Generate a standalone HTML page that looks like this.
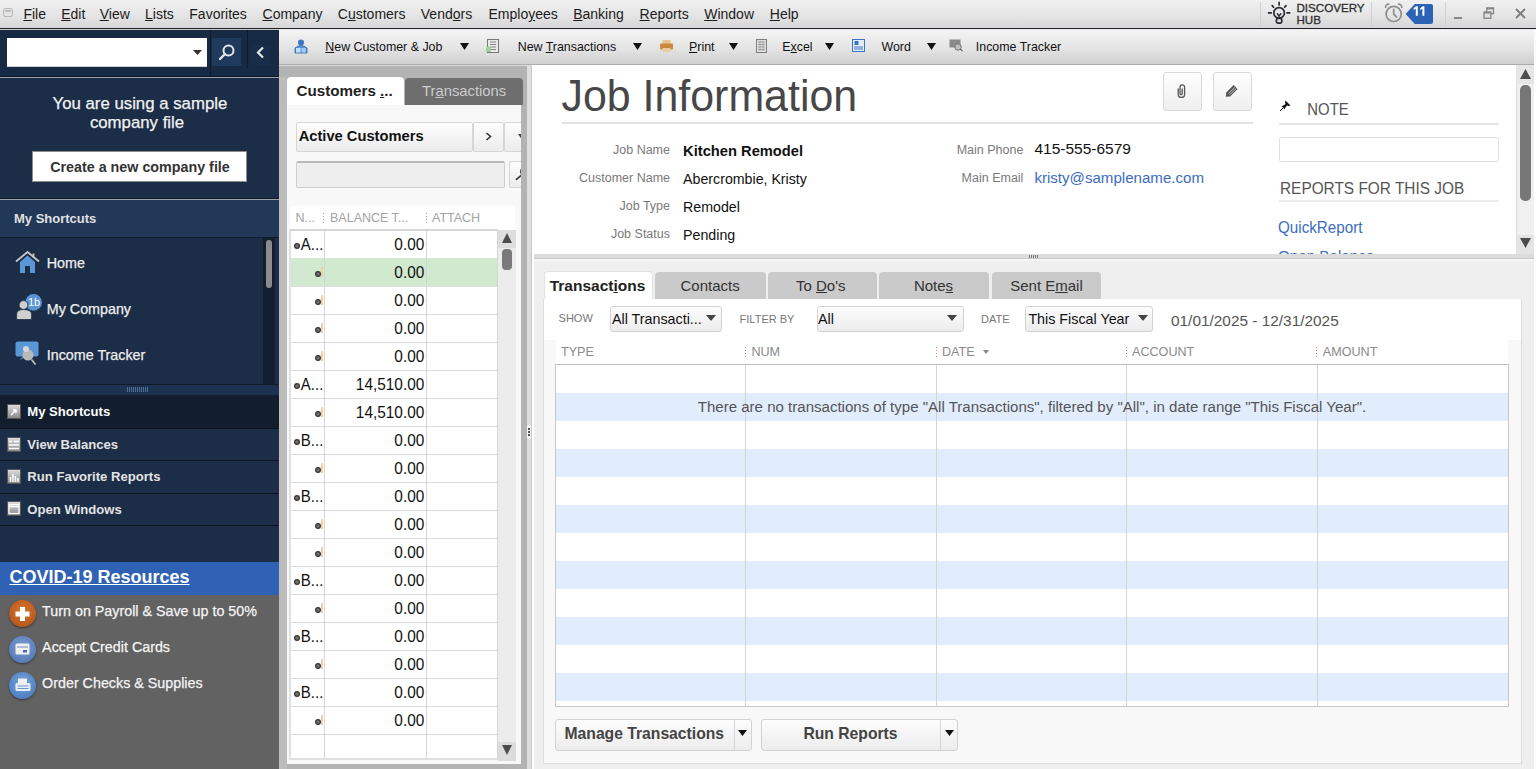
<!DOCTYPE html><html><head><meta charset="utf-8"><style>
*{margin:0;padding:0;box-sizing:border-box}
html,body{width:1536px;height:769px;overflow:hidden;background:#fff;font-family:"Liberation Sans",sans-serif}
body>div, .a div{position:absolute}
.t{position:absolute;white-space:nowrap}
u{text-decoration:underline;text-underline-offset:1px}
svg{position:absolute;overflow:visible}
</style></head><body><div style="left:0px;top:0px;width:1536px;height:28px;background:linear-gradient(#f0f0f0,#e6e6e6 50%,#d6d6d6)"></div>
<div style="left:0px;top:28px;width:1536px;height:1px;background:#1e2228"></div>
<div style="left:0px;top:29px;width:279px;height:1px;background:#c9c9c9"></div>
<div style="left:279px;top:29px;width:1257px;height:1px;background:#ececec"></div>
<div style="left:3px;top:8px;width:10px;height:9px;border:1px solid #b9b9b9;border-radius:2px;background:#e4e4e4"></div>
<div style="left:5px;top:10px;width:6px;height:2px;background:#bdbdbd"></div>
<div class="t" style="left:23.4px;top:7.05px;font-size:14px;line-height:14px;font-weight:400;color:#1c1c1c;"><u>F</u>ile</div>
<div class="t" style="left:61.2px;top:7.05px;font-size:14px;line-height:14px;font-weight:400;color:#1c1c1c;"><u>E</u>dit</div>
<div class="t" style="left:99.7px;top:7.05px;font-size:14px;line-height:14px;font-weight:400;color:#1c1c1c;"><u>V</u>iew</div>
<div class="t" style="left:145px;top:7.05px;font-size:14px;line-height:14px;font-weight:400;color:#1c1c1c;"><u>L</u>ists</div>
<div class="t" style="left:189.3px;top:7.05px;font-size:14px;line-height:14px;font-weight:400;color:#1c1c1c;">Favorites</div>
<div class="t" style="left:262.5px;top:7.05px;font-size:14px;line-height:14px;font-weight:400;color:#1c1c1c;"><u>C</u>ompany</div>
<div class="t" style="left:337.8px;top:7.05px;font-size:14px;line-height:14px;font-weight:400;color:#1c1c1c;">C<u>u</u>stomers</div>
<div class="t" style="left:420.8px;top:7.05px;font-size:14px;line-height:14px;font-weight:400;color:#1c1c1c;">Vend<u>o</u>rs</div>
<div class="t" style="left:488.5px;top:7.05px;font-size:14px;line-height:14px;font-weight:400;color:#1c1c1c;">Emplo<u>y</u>ees</div>
<div class="t" style="left:573.2px;top:7.05px;font-size:14px;line-height:14px;font-weight:400;color:#1c1c1c;"><u>B</u>anking</div>
<div class="t" style="left:639.6px;top:7.05px;font-size:14px;line-height:14px;font-weight:400;color:#1c1c1c;"><u>R</u>eports</div>
<div class="t" style="left:704.2px;top:7.05px;font-size:14px;line-height:14px;font-weight:400;color:#1c1c1c;"><u>W</u>indow</div>
<div class="t" style="left:769.8px;top:7.05px;font-size:14px;line-height:14px;font-weight:400;color:#1c1c1c;"><u>H</u>elp</div>
<div style="left:1260px;top:2px;width:1px;height:24px;background:#d0d0d0"></div>
<div style="left:1371px;top:2px;width:1px;height:24px;background:#d0d0d0"></div>
<div style="left:1445px;top:2px;width:1px;height:24px;background:#d0d0d0"></div>
<svg style="left:1262px;top:0px" width="38" height="28" viewBox="0 0 38 28">
<g stroke="#2a2a32" stroke-width="1.7" fill="none" stroke-linecap="round">
<circle cx="17.1" cy="12.9" r="5.3"/>
<rect x="14.4" y="18.4" width="5.4" height="4.8" rx="1.6"/>
<path d="M17.1 2.4V5M10.2 5.6L11.6 7.2M24 5.6L22.6 7.2M6.6 12.9H9.2M25 12.9H27.6"/>
<path d="M15.3 13.7L17.1 15.9L18.9 13.7M17.1 15.9V18.4" stroke-width="1.4"/>
</g></svg>
<div class="t" style="left:1296.5px;top:2.18px;font-size:11.6px;line-height:11.6px;font-weight:400;color:#2e2e2e;-webkit-text-stroke:0.3px #2e2e2e">DISCOVERY</div>
<div class="t" style="left:1296.5px;top:13.98px;font-size:11.6px;line-height:11.6px;font-weight:400;color:#2e2e2e;-webkit-text-stroke:0.3px #2e2e2e">HUB</div>
<svg style="left:1376px;top:0px" width="60" height="28" viewBox="0 0 60 28">
<g stroke="#8e8e8e" stroke-width="1.7" fill="none" stroke-linecap="round">
<circle cx="17.7" cy="13.9" r="7.6"/><path d="M17.7 9.4V14.2L20.4 16.8"/>
<path d="M9.6 7.2A3 3 0 0 1 12.8 4.2M25.8 7.2A3 3 0 0 0 22.6 4.2"/>
</g>
<path d="M29.6 14 L38.8 4 H55 a2 2 0 0 1 2 2 V22 a2 2 0 0 1 -2 2 H38.8 Z" fill="#2d63b6"/>
<path d="M37.6 8.2 L40 6.2 H41.8 V15.8 H39.8 V8.8 L37.6 9.9Z M44.2 8.2 L46.6 6.2 H48.4 V15.8 H46.4 V8.8 L44.2 9.9Z" fill="#fff"/>
</svg>
<div style="left:1454px;top:17px;width:8px;height:2px;background:#8a8a8a"></div>
<svg style="left:1483px;top:7px" width="13" height="13" viewBox="0 0 13 13"><rect x="3.7" y="0.9" width="6.8" height="5.8" fill="#e4e4e4" stroke="#858585" stroke-width="1.3"/><path d="M3.7 1.6H10.5" stroke="#858585" stroke-width="1.6"/><rect x="1" y="5" width="6.8" height="6.3" fill="#e0e0e0" stroke="#858585" stroke-width="1.3"/><path d="M1 5.7H7.8" stroke="#858585" stroke-width="1.6"/></svg>
<svg style="left:1515px;top:8px" width="11" height="11" viewBox="0 0 11 11"><path d="M1 1L10 10M10 1L1 10" stroke="#7d7d7d" stroke-width="1.8"/></svg>
<div style="left:279px;top:30px;width:1257px;height:34px;background:linear-gradient(#f4f4f4,#e4e4e4 55%,#cfcfcf)"></div>
<div style="left:279px;top:64px;width:1255px;height:1px;background:#adadad"></div>
<div style="left:1534px;top:30px;width:2px;height:35px;background:#fafafa"></div>
<svg style="left:294px;top:39px" width="14" height="15" viewBox="0 0 14 15">
<circle cx="7" cy="3.5" r="3" fill="#3d73c4"/><path d="M1 9 Q7 4 13 9 V14 H1Z" fill="#5d93d8" stroke="#2f5ea8" stroke-width="0.8"/>
<rect x="2" y="9" width="4.5" height="4.5" fill="#bfe0fb"/><rect x="7.5" y="9" width="4.5" height="4.5" fill="#9ccaf2"/></svg>
<div class="t" style="left:325.3px;top:40.60px;font-size:12.4px;line-height:12.4px;font-weight:400;color:#111;"><u>N</u>ew Customer &amp; Job</div>
<svg style="left:460px;top:43px" width="9" height="7" viewBox="0 0 9 7"><path d="M0 0H9L4.5 7Z" fill="#111"/></svg>
<svg style="left:486px;top:39px" width="13" height="14" viewBox="0 0 13 14">
<rect x="1.5" y="0.5" width="11" height="13" fill="#e9e9e9" stroke="#777"/><path d="M4 3h6M4 5.5h6M4 8h6M4 10.5h6" stroke="#888"/>
<path d="M0 9 l2.5 -2 l2.5 2 v4 h-5z" fill="#9ed29a"/></svg>
<div class="t" style="left:517.7px;top:40.60px;font-size:12.4px;line-height:12.4px;font-weight:400;color:#111;">New <u>T</u>ransactions</div>
<svg style="left:633px;top:43px" width="9" height="7" viewBox="0 0 9 7"><path d="M0 0H9L4.5 7Z" fill="#111"/></svg>
<svg style="left:660px;top:40px" width="13" height="12" viewBox="0 0 13 12">
<rect x="2.5" y="0" width="8" height="4" fill="#e6c48a"/><rect x="0" y="3.5" width="13" height="6" rx="1" fill="#c98a3d"/>
<rect x="2.5" y="8" width="8" height="4" fill="#e9cf9f"/></svg>
<div class="t" style="left:689px;top:40.60px;font-size:12.4px;line-height:12.4px;font-weight:400;color:#111;"><u>P</u>rint</div>
<svg style="left:729px;top:43px" width="9" height="7" viewBox="0 0 9 7"><path d="M0 0H9L4.5 7Z" fill="#111"/></svg>
<svg style="left:756px;top:39px" width="11" height="14" viewBox="0 0 11 14">
<rect x="0.5" y="0.5" width="10" height="13" fill="#dedede" stroke="#7e7e7e"/><path d="M2 3h7M2 5.5h7M2 8h7M2 10.5h7M4 2v10M7 2v10" stroke="#9a9a9a" stroke-width="0.8"/></svg>
<div class="t" style="left:782.3px;top:40.60px;font-size:12.4px;line-height:12.4px;font-weight:400;color:#111;">E<u>x</u>cel</div>
<svg style="left:825px;top:43px" width="9" height="7" viewBox="0 0 9 7"><path d="M0 0H9L4.5 7Z" fill="#111"/></svg>
<svg style="left:852px;top:39px" width="13" height="13" viewBox="0 0 13 13">
<rect x="0.5" y="0.5" width="12" height="12" fill="#e3eefb" stroke="#3d73c4"/><rect x="2.5" y="2" width="4" height="4" fill="#3d73c4"/><path d="M2 8h9M2 10h9" stroke="#3d73c4"/></svg>
<div class="t" style="left:881.5px;top:40.60px;font-size:12.4px;line-height:12.4px;font-weight:400;color:#111;">Word</div>
<svg style="left:927px;top:43px" width="9" height="7" viewBox="0 0 9 7"><path d="M0 0H9L4.5 7Z" fill="#111"/></svg>
<svg style="left:949px;top:39px" width="14" height="12" viewBox="0 0 14 12">
<rect x="0.5" y="0.5" width="11" height="8" fill="#8a8a8a"/><circle cx="9" cy="8" r="3.2" fill="#bdbdbd" stroke="#777"/><path d="M11 10l2.5 2" stroke="#666" stroke-width="1.3"/></svg>
<div class="t" style="left:975.8px;top:40.60px;font-size:12.4px;line-height:12.4px;font-weight:400;color:#111;">Income Tracker</div>
<div style="left:0px;top:30px;width:279px;height:739px;background:#1b2d47"></div>
<div style="left:0px;top:30px;width:279px;height:47px;background:#172a44"></div>
<div style="left:0px;top:76px;width:279px;height:1px;background:#0e1826"></div>
<div style="left:210px;top:30px;width:1px;height:46px;background:#0f1b2b"></div>
<div style="left:0px;top:77px;width:279px;height:1px;background:#9aa0a8"></div>
<div style="left:7px;top:38px;width:200px;height:29px;background:#fff;border-bottom:1px solid #cfcfcf"></div>
<svg style="left:193px;top:50px" width="9" height="5" viewBox="0 0 9 5"><path d="M0 0H9L4.5 5Z" fill="#333"/></svg>
<div style="left:212px;top:38px;width:29px;height:28px;background:#1f3a5c"></div>
<svg style="left:218px;top:43px" width="18" height="18" viewBox="0 0 18 18">
<circle cx="10.5" cy="7.5" r="5" stroke="#e6e6e6" stroke-width="2" fill="none"/><path d="M7 11L2 16" stroke="#e6e6e6" stroke-width="2.4" stroke-linecap="round"/></svg>
<div style="left:247px;top:30px;width:1px;height:38px;background:#0f1a2a"></div>
<div style="left:251px;top:45px;width:20px;height:20px;background:#182d49"></div>
<svg style="left:256px;top:46px" width="9" height="13" viewBox="0 0 9 13"><path d="M7 1.5L2 6.5L7 11.5" stroke="#e8e8e8" stroke-width="2.2" fill="none"/></svg>
<div class="t" style="left:-260.1px;width:800px;text-align:center;top:95.58px;font-size:16.8px;line-height:16.8px;font-weight:400;color:#f2f2f2;-webkit-text-stroke:0.25px currentColor;">You are using a sample</div>
<div class="t" style="left:-263px;width:800px;text-align:center;top:115.28px;font-size:16.8px;line-height:16.8px;font-weight:400;color:#f2f2f2;-webkit-text-stroke:0.25px currentColor;">company file</div>
<div style="left:32px;top:151px;width:215px;height:31px;background:#fff;border:1px solid #8d8d8d"></div>
<div class="t" style="left:-260px;width:800px;text-align:center;top:159.50px;font-size:14.3px;line-height:14.3px;font-weight:700;color:#333;">Create a new company file</div>
<div style="left:0px;top:198px;width:279px;height:1px;background:#0f1a2a"></div>
<div style="left:0px;top:199px;width:279px;height:1px;background:#9aa1ab"></div>
<div style="left:0px;top:200px;width:279px;height:37px;background:#213859"></div>
<div class="t" style="left:14px;top:212.00px;font-size:13px;line-height:13px;font-weight:700;color:#e0e0e0;">My Shortcuts</div>
<div style="left:0px;top:237px;width:279px;height:1px;background:#111b29"></div>
<div style="left:0px;top:238px;width:279px;height:146px;background:#1b2d47"></div>
<div style="left:263px;top:238px;width:12px;height:146px;background:#131f31"></div>
<div style="left:266px;top:240px;width:6px;height:48px;background:#8c8c8c;border-radius:3px"></div>
<svg style="left:15px;top:251px" width="25" height="23" viewBox="0 0 25 23">
<path d="M1 10.5 L12.5 1 L24 10.5" stroke="#c9c9c9" stroke-width="1.8" fill="none"/><path d="M18.5 2.5v4" stroke="#c9c9c9" stroke-width="1.8"/>
<path d="M5 11 L12.5 4.5 L20 11 V22 H15 V15 H10 V22 H5Z" fill="#5a97d6"/></svg>
<div class="t" style="left:46.8px;top:255.90px;font-size:14.3px;line-height:14.3px;font-weight:400;color:#eeeeee;-webkit-text-stroke:0.25px currentColor;">Home</div>
<svg style="left:15px;top:292px" width="28" height="28" viewBox="0 0 28 28">
<circle cx="18.6" cy="10.4" r="8.3" fill="#5b95d5"/>
<text x="19" y="14.2" font-family="Liberation Sans" font-size="11" fill="#fff" text-anchor="middle">1b</text>
<circle cx="8.5" cy="13" r="4.4" fill="#cfcfcf" stroke="#1b2d47" stroke-width="0.8"/>
<path d="M1.6 27.5 V22.5 Q1.6 17.5 8.5 17.5 Q16.6 17.5 16.6 22.5 V27.5Z" fill="#cfcfcf" stroke="#1b2d47" stroke-width="0.8"/></svg>
<div class="t" style="left:46.8px;top:302.20px;font-size:14.3px;line-height:14.3px;font-weight:400;color:#eeeeee;-webkit-text-stroke:0.25px currentColor;">My Company</div>
<svg style="left:15px;top:341px" width="25" height="27" viewBox="0 0 25 27">
<rect x="0.5" y="0.5" width="23" height="15" rx="2" fill="#5a97d6"/><path d="M8 15 L5 19 L12 15Z" fill="#5a97d6"/>
<circle cx="13" cy="14" r="5.5" fill="#b9b9b9"/><path d="M16.5 18.5l4 5" stroke="#bdbdbd" stroke-width="1.8"/>
<circle cx="11" cy="8" r="3" fill="#d8d8d8"/></svg>
<div class="t" style="left:46.8px;top:347.50px;font-size:14.3px;line-height:14.3px;font-weight:400;color:#eeeeee;-webkit-text-stroke:0.25px currentColor;">Income Tracker</div>
<div style="left:0px;top:384px;width:279px;height:11px;background:#1d3250;border-top:1px solid #101a28"></div>
<div style="left:127px;top:387px;width:22px;height:5px;background:repeating-linear-gradient(90deg,#4e6f96 0 1px,transparent 1px 2px)"></div>
<div style="left:0px;top:395px;width:279px;height:33px;background:#121e2e"></div>
<div style="left:0px;top:428px;width:279px;height:1px;background:#0c1520"></div>
<div style="left:0px;top:429px;width:279px;height:31px;background:#1b2d47"></div>
<div style="left:0px;top:460px;width:279px;height:1px;background:#0c1520"></div>
<div style="left:0px;top:461px;width:279px;height:32px;background:#1b2d47"></div>
<div style="left:0px;top:493px;width:279px;height:1px;background:#0c1520"></div>
<div style="left:0px;top:494px;width:279px;height:31px;background:#1b2d47"></div>
<div style="left:0px;top:525px;width:279px;height:1px;background:#0c1520"></div>
<div style="left:7px;top:404px;width:14px;height:15px;background:linear-gradient(#dcdcdc,#8a8a8a);border:1px solid #555"></div>
<div style="left:7px;top:437px;width:14px;height:15px;background:linear-gradient(#dcdcdc,#8a8a8a);border:1px solid #555"></div>
<div style="left:7px;top:469px;width:14px;height:15px;background:linear-gradient(#dcdcdc,#8a8a8a);border:1px solid #555"></div>
<div style="left:7px;top:501px;width:14px;height:15px;background:linear-gradient(#dcdcdc,#8a8a8a);border:1px solid #555"></div>
<svg style="left:8px;top:439px" width="12" height="12" viewBox="0 0 12 12"><path d="M1 2.5h3M6 2.5h5M1 6h10M1 9.5h10" stroke="#fff" stroke-width="1.3"/></svg>
<svg style="left:8px;top:471px" width="12" height="12" viewBox="0 0 12 12"><path d="M2.5 11V6M5 11V3M7.5 11V5M10 11V7" stroke="#fff" stroke-width="1.5"/></svg>
<svg style="left:8px;top:503px" width="12" height="12" viewBox="0 0 12 12"><rect x="1" y="1.5" width="10" height="9" fill="none" stroke="#fff" stroke-width="1.2"/><path d="M1 3.5h10" stroke="#fff" stroke-width="1.6"/></svg>
<svg style="left:9px;top:407px" width="10" height="10" viewBox="0 0 10 10"><path d="M2 8 L7 3 M4 3 H7 V6" stroke="#fff" stroke-width="1.5" fill="none"/></svg>
<div class="t" style="left:27.3px;top:405.31px;font-size:13.1px;line-height:13.1px;font-weight:700;color:#ffffff;">My Shortcuts</div>
<div class="t" style="left:27.3px;top:437.91px;font-size:13.1px;line-height:13.1px;font-weight:700;color:#e3e3e3;">View Balances</div>
<div class="t" style="left:27.3px;top:469.91px;font-size:13.1px;line-height:13.1px;font-weight:700;color:#e3e3e3;">Run Favorite Reports</div>
<div class="t" style="left:27.3px;top:502.91px;font-size:13.1px;line-height:13.1px;font-weight:700;color:#e3e3e3;">Open Windows</div>
<div style="left:0px;top:562px;width:279px;height:33px;background:#2f62b4"></div>
<div class="t" style="left:9.5px;top:567.76px;font-size:18px;line-height:18px;font-weight:700;color:#ffffff;text-decoration-thickness:1.5px"><u>COVID-19 Resources</u></div>
<div style="left:0px;top:595px;width:279px;height:174px;background:#626262"></div>
<div style="left:9px;top:600px;width:27px;height:27px;border-radius:50%;background:radial-gradient(circle at 50% 40%,#d9742c,#a8501a);box-shadow:0 1px 2px #333"></div>
<svg style="left:13px;top:604px" width="19" height="19" viewBox="0 0 19 19"><path d="M7 3h5v4.5h4.5v5H12V17H7v-4.5H2.5v-5H7Z" fill="#fff"/></svg>
<div class="t" style="left:42.1px;top:603.60px;font-size:14.3px;line-height:14.3px;font-weight:400;color:#f4f4f4;-webkit-text-stroke:0.25px currentColor;">Turn on Payroll &amp; Save up to 50%</div>
<div style="left:9px;top:636px;width:27px;height:27px;border-radius:50%;background:radial-gradient(circle at 50% 40%,#7e9fd6,#4a6eae);box-shadow:0 1px 2px #333"></div>
<svg style="left:15px;top:643px" width="15" height="13" viewBox="0 0 15 13"><rect x="0.5" y="0.5" width="14" height="11" rx="1.5" fill="#f0f0f0"/><path d="M2 4h11" stroke="#8aa2cc" stroke-width="1.3"/><rect x="8" y="7" width="4" height="2.5" fill="#4a6eae"/></svg>
<div class="t" style="left:42.1px;top:639.70px;font-size:14.3px;line-height:14.3px;font-weight:400;color:#f4f4f4;-webkit-text-stroke:0.25px currentColor;">Accept Credit Cards</div>
<div style="left:9px;top:672px;width:27px;height:27px;border-radius:50%;background:radial-gradient(circle at 50% 40%,#7aa7dc,#3f70b8);box-shadow:0 1px 2px #333"></div>
<svg style="left:15px;top:678px" width="16" height="15" viewBox="0 0 16 15"><rect x="3" y="0.5" width="9" height="6" fill="#f0f0f0"/><rect x="0.5" y="5" width="15" height="8" rx="1.5" fill="#e8eef8"/><path d="M2.5 8h11M2.5 10.5h11" stroke="#6f93c9" stroke-width="1"/></svg>
<div class="t" style="left:42.1px;top:676.20px;font-size:14.3px;line-height:14.3px;font-weight:400;color:#f4f4f4;-webkit-text-stroke:0.25px currentColor;">Order Checks &amp; Supplies</div>
<div style="left:279px;top:65px;width:253px;height:1px;background:#dadada"></div>
<div style="left:279px;top:66px;width:248px;height:703px;background:#b3b3b3"></div>
<div style="left:279px;top:77px;width:8px;height:692px;background:#bcbcbc"></div>
<div style="left:527px;top:66px;width:4px;height:703px;background:#dedede"></div>
<div style="left:531px;top:66px;width:1px;height:703px;background:#c6c6c6"></div>
<div style="left:527px;top:425px;width:4px;height:14px;background:#f4f4f4"></div>
<div style="left:528px;top:428px;width:2px;height:2px;background:#555"></div>
<div style="left:528px;top:431px;width:2px;height:2px;background:#555"></div>
<div style="left:528px;top:434px;width:2px;height:2px;background:#555"></div>
<div style="left:287px;top:77px;width:117px;height:28px;background:#fff;border-radius:4px 4px 0 0"></div>
<div class="t" style="left:296.5px;top:83.43px;font-size:15.2px;line-height:15.2px;font-weight:700;color:#222;">Customers <u>.</u>..</div>
<div style="left:405px;top:78px;width:118px;height:27px;background:#6e6e6e;border-radius:4px 4px 0 0"></div>
<div class="t" style="left:422px;top:83.77px;font-size:14.8px;line-height:14.8px;font-weight:400;color:#cbcbcb;">Tr<u>a</u>nsactions</div>
<div style="left:287px;top:105px;width:234px;height:659px;background:#f8f8f8"></div>
<div style="left:296px;top:122px;width:177px;height:30px;background:linear-gradient(#fdfdfd,#ececec);border:1px solid #d6d6d6;border-radius:2px"></div>
<div class="t" style="left:298.7px;top:128.96px;font-size:14.7px;line-height:14.7px;font-weight:700;color:#111;">Active Customers</div>
<div style="left:473px;top:122px;width:31px;height:30px;background:linear-gradient(#fdfdfd,#ececec);border:1px solid #d6d6d6;border-radius:2px"></div>
<svg style="left:485px;top:132px" width="7" height="9" viewBox="0 0 7 9"><path d="M1.5 1L5.5 4.5L1.5 8" stroke="#333" stroke-width="1.6" fill="none"/></svg>
<div style="left:504px;top:122px;width:17px;height:30px;background:linear-gradient(#fdfdfd,#ececec);border:1px solid #d6d6d6;border-right:none;border-radius:2px 0 0 2px"></div>
<div style="left:504px;top:122px;width:17px;height:30px;overflow:hidden"><svg style="left:14px;top:12px" width="7" height="5" viewBox="0 0 7 5"><path d="M0 0H7L3.5 5Z" fill="#444"/></svg></div>
<div style="left:296px;top:161px;width:209px;height:27px;background:#eeeeee;border:1px solid #cfcfcf;border-top:2px solid #b9b9b9;border-radius:2px"></div>
<div style="left:509px;top:161px;width:12px;height:27px;background:linear-gradient(#fdfdfd,#ececec);border:1px solid #d6d6d6;border-right:none;border-radius:2px 0 0 2px"></div>
<div style="left:509px;top:161px;width:12px;height:27px;overflow:hidden"><svg style="left:6px;top:5px" width="16" height="16" viewBox="0 0 16 16"><circle cx="10" cy="5.5" r="4.2" stroke="#444" stroke-width="1.6" fill="none"/><path d="M6.8 9L1.5 13.2" stroke="#444" stroke-width="1.8" stroke-linecap="round"/></svg></div>
<div style="left:290px;top:206px;width:225px;height:24px;background:#fff"></div>
<div class="t" style="left:295.5px;top:211.82px;font-size:12.5px;line-height:12.5px;font-weight:400;color:#a3a3a3;">N...</div>
<div class="t" style="left:330px;top:211.82px;font-size:12.5px;line-height:12.5px;font-weight:400;color:#a3a3a3;">BALANCE T...</div>
<div class="t" style="left:432px;top:211.82px;font-size:12.5px;line-height:12.5px;font-weight:400;color:#a3a3a3;">ATTACH</div>
<div style="left:323px;top:213px;width:1px;height:10px;background:repeating-linear-gradient(#999 0 1.5px,transparent 1.5px 3px)"></div>
<div style="left:425.5px;top:213px;width:1px;height:10px;background:repeating-linear-gradient(#999 0 1.5px,transparent 1.5px 3px)"></div>
<div style="left:289px;top:229px;width:209px;height:531px;background:#fff;border:1px solid #d6d6d6;border-top:2px solid #d6d6d6;border-left:2px solid #e0e0e0;border-bottom:2px solid #e0e0e0"></div>
<div style="left:291px;top:258px;width:206px;height:1px;background:#dcdcdc"></div>
<div style="left:293.5px;top:243px;width:6px;height:6px;border-radius:50%;background:radial-gradient(#8a8a8a,#333 60%,#222)"></div>
<div class="t" style="left:300.8px;top:237.30px;font-size:15px;line-height:15px;font-weight:400;color:#111;transform:scaleY(1.04);transform-origin:0 84.65%">A...</div>
<div class="t" style="right:1111.7px;top:236.96px;font-size:15.4px;line-height:15.4px;font-weight:400;color:#111;transform:scaleY(1.07);transform-origin:0 84.65%">0.00</div>
<div style="left:291px;top:258px;width:206px;height:28px;background:#d1e9cf"></div>
<div style="left:291px;top:286px;width:206px;height:1px;background:#dcdcdc"></div>
<div style="left:315px;top:271px;width:6px;height:6px;border-radius:50%;background:radial-gradient(#8a8a8a,#333 60%,#222)"></div>
<div style="left:321px;top:267px;width:2px;height:10px;background:#f3cfa3"></div>
<div class="t" style="right:1111.7px;top:264.96px;font-size:15.4px;line-height:15.4px;font-weight:400;color:#111;transform:scaleY(1.07);transform-origin:0 84.65%">0.00</div>
<div style="left:291px;top:314px;width:206px;height:1px;background:#dcdcdc"></div>
<div style="left:315px;top:299px;width:6px;height:6px;border-radius:50%;background:radial-gradient(#8a8a8a,#333 60%,#222)"></div>
<div style="left:321px;top:295px;width:2px;height:10px;background:#f3cfa3"></div>
<div class="t" style="right:1111.7px;top:292.96px;font-size:15.4px;line-height:15.4px;font-weight:400;color:#111;transform:scaleY(1.07);transform-origin:0 84.65%">0.00</div>
<div style="left:291px;top:342px;width:206px;height:1px;background:#dcdcdc"></div>
<div style="left:315px;top:327px;width:6px;height:6px;border-radius:50%;background:radial-gradient(#8a8a8a,#333 60%,#222)"></div>
<div style="left:321px;top:323px;width:2px;height:10px;background:#f3cfa3"></div>
<div class="t" style="right:1111.7px;top:320.96px;font-size:15.4px;line-height:15.4px;font-weight:400;color:#111;transform:scaleY(1.07);transform-origin:0 84.65%">0.00</div>
<div style="left:291px;top:370px;width:206px;height:1px;background:#dcdcdc"></div>
<div style="left:315px;top:355px;width:6px;height:6px;border-radius:50%;background:radial-gradient(#8a8a8a,#333 60%,#222)"></div>
<div style="left:321px;top:351px;width:2px;height:10px;background:#f3cfa3"></div>
<div class="t" style="right:1111.7px;top:348.96px;font-size:15.4px;line-height:15.4px;font-weight:400;color:#111;transform:scaleY(1.07);transform-origin:0 84.65%">0.00</div>
<div style="left:291px;top:398px;width:206px;height:1px;background:#dcdcdc"></div>
<div style="left:293.5px;top:383px;width:6px;height:6px;border-radius:50%;background:radial-gradient(#8a8a8a,#333 60%,#222)"></div>
<div class="t" style="left:300.8px;top:377.30px;font-size:15px;line-height:15px;font-weight:400;color:#111;transform:scaleY(1.04);transform-origin:0 84.65%">A...</div>
<div class="t" style="right:1111.7px;top:376.96px;font-size:15.4px;line-height:15.4px;font-weight:400;color:#111;transform:scaleY(1.07);transform-origin:0 84.65%">14,510.00</div>
<div style="left:291px;top:426px;width:206px;height:1px;background:#dcdcdc"></div>
<div style="left:315px;top:411px;width:6px;height:6px;border-radius:50%;background:radial-gradient(#8a8a8a,#333 60%,#222)"></div>
<div style="left:321px;top:407px;width:2px;height:10px;background:#f3cfa3"></div>
<div class="t" style="right:1111.7px;top:404.96px;font-size:15.4px;line-height:15.4px;font-weight:400;color:#111;transform:scaleY(1.07);transform-origin:0 84.65%">14,510.00</div>
<div style="left:291px;top:454px;width:206px;height:1px;background:#dcdcdc"></div>
<div style="left:293.5px;top:439px;width:6px;height:6px;border-radius:50%;background:radial-gradient(#8a8a8a,#333 60%,#222)"></div>
<div class="t" style="left:300.8px;top:433.30px;font-size:15px;line-height:15px;font-weight:400;color:#111;transform:scaleY(1.04);transform-origin:0 84.65%">B...</div>
<div class="t" style="right:1111.7px;top:432.96px;font-size:15.4px;line-height:15.4px;font-weight:400;color:#111;transform:scaleY(1.07);transform-origin:0 84.65%">0.00</div>
<div style="left:291px;top:482px;width:206px;height:1px;background:#dcdcdc"></div>
<div style="left:315px;top:467px;width:6px;height:6px;border-radius:50%;background:radial-gradient(#8a8a8a,#333 60%,#222)"></div>
<div style="left:321px;top:463px;width:2px;height:10px;background:#f3cfa3"></div>
<div class="t" style="right:1111.7px;top:460.96px;font-size:15.4px;line-height:15.4px;font-weight:400;color:#111;transform:scaleY(1.07);transform-origin:0 84.65%">0.00</div>
<div style="left:291px;top:510px;width:206px;height:1px;background:#dcdcdc"></div>
<div style="left:293.5px;top:495px;width:6px;height:6px;border-radius:50%;background:radial-gradient(#8a8a8a,#333 60%,#222)"></div>
<div class="t" style="left:300.8px;top:489.30px;font-size:15px;line-height:15px;font-weight:400;color:#111;transform:scaleY(1.04);transform-origin:0 84.65%">B...</div>
<div class="t" style="right:1111.7px;top:488.96px;font-size:15.4px;line-height:15.4px;font-weight:400;color:#111;transform:scaleY(1.07);transform-origin:0 84.65%">0.00</div>
<div style="left:291px;top:538px;width:206px;height:1px;background:#dcdcdc"></div>
<div style="left:315px;top:523px;width:6px;height:6px;border-radius:50%;background:radial-gradient(#8a8a8a,#333 60%,#222)"></div>
<div style="left:321px;top:519px;width:2px;height:10px;background:#f3cfa3"></div>
<div class="t" style="right:1111.7px;top:516.96px;font-size:15.4px;line-height:15.4px;font-weight:400;color:#111;transform:scaleY(1.07);transform-origin:0 84.65%">0.00</div>
<div style="left:291px;top:566px;width:206px;height:1px;background:#dcdcdc"></div>
<div style="left:315px;top:551px;width:6px;height:6px;border-radius:50%;background:radial-gradient(#8a8a8a,#333 60%,#222)"></div>
<div style="left:321px;top:547px;width:2px;height:10px;background:#f3cfa3"></div>
<div class="t" style="right:1111.7px;top:544.96px;font-size:15.4px;line-height:15.4px;font-weight:400;color:#111;transform:scaleY(1.07);transform-origin:0 84.65%">0.00</div>
<div style="left:291px;top:594px;width:206px;height:1px;background:#dcdcdc"></div>
<div style="left:293.5px;top:579px;width:6px;height:6px;border-radius:50%;background:radial-gradient(#8a8a8a,#333 60%,#222)"></div>
<div class="t" style="left:300.8px;top:573.30px;font-size:15px;line-height:15px;font-weight:400;color:#111;transform:scaleY(1.04);transform-origin:0 84.65%">B...</div>
<div class="t" style="right:1111.7px;top:572.96px;font-size:15.4px;line-height:15.4px;font-weight:400;color:#111;transform:scaleY(1.07);transform-origin:0 84.65%">0.00</div>
<div style="left:291px;top:622px;width:206px;height:1px;background:#dcdcdc"></div>
<div style="left:315px;top:607px;width:6px;height:6px;border-radius:50%;background:radial-gradient(#8a8a8a,#333 60%,#222)"></div>
<div style="left:321px;top:603px;width:2px;height:10px;background:#f3cfa3"></div>
<div class="t" style="right:1111.7px;top:600.96px;font-size:15.4px;line-height:15.4px;font-weight:400;color:#111;transform:scaleY(1.07);transform-origin:0 84.65%">0.00</div>
<div style="left:291px;top:650px;width:206px;height:1px;background:#dcdcdc"></div>
<div style="left:293.5px;top:635px;width:6px;height:6px;border-radius:50%;background:radial-gradient(#8a8a8a,#333 60%,#222)"></div>
<div class="t" style="left:300.8px;top:629.30px;font-size:15px;line-height:15px;font-weight:400;color:#111;transform:scaleY(1.04);transform-origin:0 84.65%">B...</div>
<div class="t" style="right:1111.7px;top:628.96px;font-size:15.4px;line-height:15.4px;font-weight:400;color:#111;transform:scaleY(1.07);transform-origin:0 84.65%">0.00</div>
<div style="left:291px;top:678px;width:206px;height:1px;background:#dcdcdc"></div>
<div style="left:315px;top:663px;width:6px;height:6px;border-radius:50%;background:radial-gradient(#8a8a8a,#333 60%,#222)"></div>
<div style="left:321px;top:659px;width:2px;height:10px;background:#f3cfa3"></div>
<div class="t" style="right:1111.7px;top:656.96px;font-size:15.4px;line-height:15.4px;font-weight:400;color:#111;transform:scaleY(1.07);transform-origin:0 84.65%">0.00</div>
<div style="left:291px;top:706px;width:206px;height:1px;background:#dcdcdc"></div>
<div style="left:293.5px;top:691px;width:6px;height:6px;border-radius:50%;background:radial-gradient(#8a8a8a,#333 60%,#222)"></div>
<div class="t" style="left:300.8px;top:685.30px;font-size:15px;line-height:15px;font-weight:400;color:#111;transform:scaleY(1.04);transform-origin:0 84.65%">B...</div>
<div class="t" style="right:1111.7px;top:684.96px;font-size:15.4px;line-height:15.4px;font-weight:400;color:#111;transform:scaleY(1.07);transform-origin:0 84.65%">0.00</div>
<div style="left:291px;top:734px;width:206px;height:1px;background:#dcdcdc"></div>
<div style="left:315px;top:719px;width:6px;height:6px;border-radius:50%;background:radial-gradient(#8a8a8a,#333 60%,#222)"></div>
<div style="left:321px;top:715px;width:2px;height:10px;background:#f3cfa3"></div>
<div class="t" style="right:1111.7px;top:712.96px;font-size:15.4px;line-height:15.4px;font-weight:400;color:#111;transform:scaleY(1.07);transform-origin:0 84.65%">0.00</div>
<div style="left:324px;top:230px;width:1px;height:528px;background:#d6d6d6"></div>
<div style="left:426px;top:230px;width:1px;height:528px;background:#d6d6d6"></div>
<div style="left:498px;top:230px;width:18px;height:529px;background:#ececec"></div>
<div style="left:498px;top:230px;width:18px;height:18px;background:#dedede"></div>
<svg style="left:502px;top:233px" width="10" height="10" viewBox="0 0 10 10"><path d="M5 0L10 10H0Z" fill="#4d4d4d"/></svg>
<div style="left:502px;top:249px;width:10px;height:21px;background:#7a7a7a;border-radius:4px"></div>
<div style="left:498px;top:742px;width:18px;height:19px;background:#dcdcdc"></div>
<svg style="left:502px;top:745px" width="10" height="10" viewBox="0 0 10 10"><path d="M0 0H10L5.0 10Z" fill="#4d4d4d"/></svg>
<div style="left:532px;top:65px;width:1004px;height:704px;background:#fff"></div>
<div class="t" style="left:561.5px;top:74.69px;font-size:42.9px;line-height:42.9px;font-weight:400;color:#474747;transform:scaleY(1.05);transform-origin:0 84.65%">Job Information</div>
<div style="left:562px;top:122px;width:691px;height:2px;background:#e4e4e4"></div>
<div style="left:1163px;top:72px;width:39px;height:39px;background:linear-gradient(#fefefe,#efefef);border:1px solid #d9d9d9;border-radius:3px"></div>
<div style="left:1213px;top:72px;width:39px;height:39px;background:linear-gradient(#fefefe,#efefef);border:1px solid #d9d9d9;border-radius:3px"></div>
<svg style="left:1177px;top:84px" width="10" height="15" viewBox="0 0 10 15">
<path d="M1.2 4.5 V10.2 A3.2 3.2 0 0 0 7.6 10.2 V3.2 A2.3 2.3 0 0 0 3 3.2 V9.6 A1.1 1.1 0 0 0 5.2 9.6 V4.6" stroke="#5a5a5a" stroke-width="1.35" fill="none"/></svg>
<svg style="left:1225px;top:84px" width="14" height="14" viewBox="0 0 14 14">
<path d="M0.8 12.7 L1.2 8.4 L8.6 1 L12.6 5 L5.2 12.4 Z" fill="#585858"/>
<path d="M3.6 9.6 L10 3.2 M4.8 10.8 L11.2 4.4" stroke="#e8e8e8" stroke-width="0.7"/></svg>
<div class="t" style="right:866px;top:144.12px;font-size:12.5px;line-height:12.5px;font-weight:400;color:#7a7a7a;">Job Name</div>
<div class="t" style="right:866px;top:172.32px;font-size:12.5px;line-height:12.5px;font-weight:400;color:#7a7a7a;">Customer Name</div>
<div class="t" style="right:866px;top:199.92px;font-size:12.5px;line-height:12.5px;font-weight:400;color:#7a7a7a;">Job Type</div>
<div class="t" style="right:866px;top:227.92px;font-size:12.5px;line-height:12.5px;font-weight:400;color:#7a7a7a;">Job Status</div>
<div class="t" style="left:683.1px;top:143.56px;font-size:14.7px;line-height:14.7px;font-weight:700;color:#111;">Kitchen Remodel</div>
<div class="t" style="left:683.1px;top:172.18px;font-size:14.2px;line-height:14.2px;font-weight:400;color:#111;">Abercrombie, Kristy</div>
<div class="t" style="left:683.1px;top:199.98px;font-size:14.2px;line-height:14.2px;font-weight:400;color:#111;">Remodel</div>
<div class="t" style="left:683.1px;top:227.98px;font-size:14.2px;line-height:14.2px;font-weight:400;color:#111;">Pending</div>
<div class="t" style="right:512.6px;top:144.42px;font-size:12.5px;line-height:12.5px;font-weight:400;color:#7a7a7a;">Main Phone</div>
<div class="t" style="right:512.6px;top:172.42px;font-size:12.5px;line-height:12.5px;font-weight:400;color:#7a7a7a;">Main Email</div>
<div class="t" style="left:1034.4px;top:141.28px;font-size:15.5px;line-height:15.5px;font-weight:400;color:#111;">415-555-6579</div>
<div class="t" style="left:1034.4px;top:169.52px;font-size:15.1px;line-height:15.1px;font-weight:400;color:#3b6dbf;">kristy@samplename.com</div>
<svg style="left:1280px;top:100px" width="11" height="11" viewBox="0 0 11 11">
<path d="M5.5 0.5 L10.5 5.5 L9 6 L7 5.5 L5 8 L5 9.5 L1.5 6 L3 5.8 L5.5 4 L5 2Z" fill="#111"/><path d="M3 8 L0 11" stroke="#111" stroke-width="1"/></svg>
<div class="t" style="left:1307.3px;top:102.99px;font-size:14.9px;line-height:14.9px;font-weight:400;color:#555;transform:scaleY(1.1);transform-origin:0 84.65%">NOTE</div>
<div style="left:1279px;top:123px;width:220px;height:2px;background:#e6e6e6"></div>
<div style="left:1279px;top:137px;width:220px;height:25px;background:#fff;border:1px solid #e2e2e2;border-radius:2px"></div>
<div class="t" style="left:1280px;top:181.36px;font-size:15.4px;line-height:15.4px;font-weight:400;color:#555;transform:scaleY(1.1);transform-origin:0 84.65%">REPORTS FOR THIS JOB</div>
<div style="left:1279px;top:200px;width:220px;height:2px;background:#ececec"></div>
<div class="t" style="left:1278px;top:220.33px;font-size:15.2px;line-height:15.2px;font-weight:400;color:#3b6dbf;transform:scaleY(1.1);transform-origin:0 84.65%">QuickReport</div>
<div style="left:1278px;top:240px;width:200px;height:14px;overflow:hidden"><div class="t" style="left:0;top:7.6px;font-size:15.2px;line-height:15.2px;color:#3b6dbf">Open Balance</div></div>
<div style="left:1516px;top:65px;width:18px;height:189px;background:#f0f0f0;border-left:1px solid #dadada"></div>
<div style="left:1516px;top:65px;width:18px;height:19px;background:#e6e6e6"></div>
<svg style="left:1520px;top:69px" width="11" height="10" viewBox="0 0 11 10"><path d="M5.5 0L11 10H0Z" fill="#4d4d4d"/></svg>
<div style="left:1520px;top:85px;width:11px;height:116px;background:#777;border-radius:5px"></div>
<div style="left:1516px;top:235px;width:18px;height:19px;background:#e4e4e4"></div>
<svg style="left:1520px;top:238px" width="11" height="10" viewBox="0 0 11 10"><path d="M0 0H11L5.5 10Z" fill="#4d4d4d"/></svg>
<div style="left:534px;top:254px;width:1000px;height:5px;background:#dcdcdc;border-bottom:1px solid #c9c9c9"></div>
<div style="left:534px;top:259px;width:1000px;height:2px;background:#f6f6f6"></div>
<div style="left:1029px;top:255px;width:9px;height:3px;background:repeating-linear-gradient(90deg,#777 0 1px,transparent 1px 2px)"></div>
<div style="left:534px;top:261px;width:1000px;height:508px;background:#efefef"></div>
<div style="left:544px;top:271px;width:109px;height:28px;background:#fff;border-radius:4px 4px 0 0;border:1px solid #e2e2e2;border-bottom:none"></div>
<div class="t" style="left:549.7px;top:277.68px;font-size:15.5px;line-height:15.5px;font-weight:700;color:#222;">Transact<u>i</u>ons</div>
<div style="left:655px;top:272px;width:111px;height:27px;background:#cacaca;border-radius:4px 4px 0 0"></div>
<div class="t" style="left:680.5px;top:278.20px;font-size:15px;line-height:15px;font-weight:400;color:#333;">Contacts</div>
<div style="left:767.5px;top:272px;width:109.5px;height:27px;background:#cacaca;border-radius:4px 4px 0 0"></div>
<div class="t" style="left:796px;top:278.20px;font-size:15px;line-height:15px;font-weight:400;color:#333;">To <u>D</u>o's</div>
<div style="left:879px;top:272px;width:110.39999999999998px;height:27px;background:#cacaca;border-radius:4px 4px 0 0"></div>
<div class="t" style="left:913.9px;top:278.20px;font-size:15px;line-height:15px;font-weight:400;color:#333;">Note<u>s</u></div>
<div style="left:991.5px;top:272px;width:109.90000000000009px;height:27px;background:#cacaca;border-radius:4px 4px 0 0"></div>
<div class="t" style="left:1010.2px;top:278.20px;font-size:15px;line-height:15px;font-weight:400;color:#333;">Sent E<u>m</u>ail</div>
<div style="left:543px;top:299px;width:979px;height:465px;background:#fff;border:1px solid #dedede;border-top:none"></div>
<div class="t" style="left:558.6px;top:313.19px;font-size:11px;line-height:11px;font-weight:400;color:#777;">SHOW</div>
<div style="left:610px;top:306px;width:112px;height:26px;background:linear-gradient(#fdfdfd,#ececec);border:1px solid #d2d2d2;border-radius:3px"></div>
<div class="t" style="left:612px;top:311.50px;font-size:14.3px;line-height:14.3px;font-weight:400;color:#111;">All Transacti...</div>
<svg style="left:706px;top:315px" width="10" height="6" viewBox="0 0 10 6"><path d="M0 0H10L5.0 6Z" fill="#444"/></svg>
<div class="t" style="left:739.6px;top:313.69px;font-size:11px;line-height:11px;font-weight:400;color:#777;">FILTER BY</div>
<div style="left:816.5px;top:306px;width:147px;height:26px;background:linear-gradient(#fdfdfd,#ececec);border:1px solid #d2d2d2;border-radius:3px"></div>
<div class="t" style="left:818px;top:311.50px;font-size:14.3px;line-height:14.3px;font-weight:400;color:#111;">All</div>
<svg style="left:947px;top:315px" width="10" height="6" viewBox="0 0 10 6"><path d="M0 0H10L5.0 6Z" fill="#444"/></svg>
<div class="t" style="left:981px;top:313.69px;font-size:11px;line-height:11px;font-weight:400;color:#777;">DATE</div>
<div style="left:1025px;top:306px;width:128px;height:26px;background:linear-gradient(#fdfdfd,#ececec);border:1px solid #d2d2d2;border-radius:3px"></div>
<div class="t" style="left:1028.4px;top:311.50px;font-size:14.3px;line-height:14.3px;font-weight:400;color:#111;">This Fiscal Year</div>
<svg style="left:1137.8px;top:315px" width="10" height="6" viewBox="0 0 10 6"><path d="M0 0H10L5.0 6Z" fill="#444"/></svg>
<div class="t" style="left:1171px;top:312.96px;font-size:15.4px;line-height:15.4px;font-weight:400;color:#555;">01/01/2025 - 12/31/2025</div>
<div style="left:544px;top:340px;width:977px;height:423px;background:#f8f8f8"></div>
<div style="left:556px;top:340px;width:952px;height:24px;background:#fff"></div>
<div class="t" style="left:561px;top:346.33px;font-size:12.6px;line-height:12.6px;font-weight:400;color:#8a8a8a;">TYPE</div>
<div class="t" style="left:751.4px;top:346.33px;font-size:12.6px;line-height:12.6px;font-weight:400;color:#8a8a8a;">NUM</div>
<div class="t" style="left:942px;top:346.33px;font-size:12.6px;line-height:12.6px;font-weight:400;color:#8a8a8a;">DATE</div>
<svg style="left:983px;top:350px" width="6" height="4" viewBox="0 0 6 4"><path d="M0 0H6L3.0 4Z" fill="#888"/></svg>
<div class="t" style="left:1132px;top:346.33px;font-size:12.6px;line-height:12.6px;font-weight:400;color:#8a8a8a;">ACCOUNT</div>
<div class="t" style="left:1322.8px;top:346.33px;font-size:12.6px;line-height:12.6px;font-weight:400;color:#8a8a8a;">AMOUNT</div>
<div style="left:744.5px;top:347px;width:1px;height:10px;background:repeating-linear-gradient(#999 0 1.5px,transparent 1.5px 3px)"></div>
<div style="left:935.5px;top:347px;width:1px;height:10px;background:repeating-linear-gradient(#999 0 1.5px,transparent 1.5px 3px)"></div>
<div style="left:1125.5px;top:347px;width:1px;height:10px;background:repeating-linear-gradient(#999 0 1.5px,transparent 1.5px 3px)"></div>
<div style="left:1316px;top:347px;width:1px;height:10px;background:repeating-linear-gradient(#999 0 1.5px,transparent 1.5px 3px)"></div>
<div style="left:555px;top:364px;width:954px;height:343px;background:#fff;border:1px solid #c8c8c8;border-top:1px solid #bdbdbd"></div>
<div style="left:556px;top:393px;width:952px;height:28px;background:#e1edfc"></div>
<div style="left:556px;top:449px;width:952px;height:28px;background:#e1edfc"></div>
<div style="left:556px;top:505px;width:952px;height:28px;background:#e1edfc"></div>
<div style="left:556px;top:561px;width:952px;height:28px;background:#e1edfc"></div>
<div style="left:556px;top:617px;width:952px;height:28px;background:#e1edfc"></div>
<div style="left:556px;top:673px;width:952px;height:28px;background:#e1edfc"></div>
<div style="left:745px;top:365px;width:1px;height:341px;background:#d4d4d4"></div>
<div style="left:936px;top:365px;width:1px;height:341px;background:#d4d4d4"></div>
<div style="left:1126px;top:365px;width:1px;height:341px;background:#d4d4d4"></div>
<div style="left:1317px;top:365px;width:1px;height:341px;background:#d4d4d4"></div>
<div class="t" style="left:632px;width:800px;text-align:center;top:398.76px;font-size:15.05px;line-height:15.05px;font-weight:400;color:#555;">There are no transactions of type "All Transactions", filtered by "All", in date range "This Fiscal Year".</div>
<div style="left:555px;top:719px;width:197px;height:32px;background:linear-gradient(#fdfdfd,#ececec);border:1px solid #d2d2d2;border-radius:3px"></div>
<div style="left:734px;top:720px;width:1px;height:30px;background:#d6d6d6"></div>
<div class="t" style="left:564.5px;top:725.71px;font-size:15.7px;line-height:15.7px;font-weight:700;color:#444;">Manage Transactions</div>
<svg style="left:738px;top:730px" width="9" height="6" viewBox="0 0 9 6"><path d="M0 0H9L4.5 6Z" fill="#111"/></svg>
<div style="left:761px;top:719px;width:197px;height:32px;background:linear-gradient(#fdfdfd,#ececec);border:1px solid #d2d2d2;border-radius:3px"></div>
<div style="left:940px;top:720px;width:1px;height:30px;background:#d6d6d6"></div>
<div class="t" style="left:450.5px;width:800px;text-align:center;top:725.71px;font-size:15.7px;line-height:15.7px;font-weight:700;color:#444;">Run Reports</div>
<svg style="left:945px;top:730px" width="9" height="6" viewBox="0 0 9 6"><path d="M0 0H9L4.5 6Z" fill="#111"/></svg></body></html>
